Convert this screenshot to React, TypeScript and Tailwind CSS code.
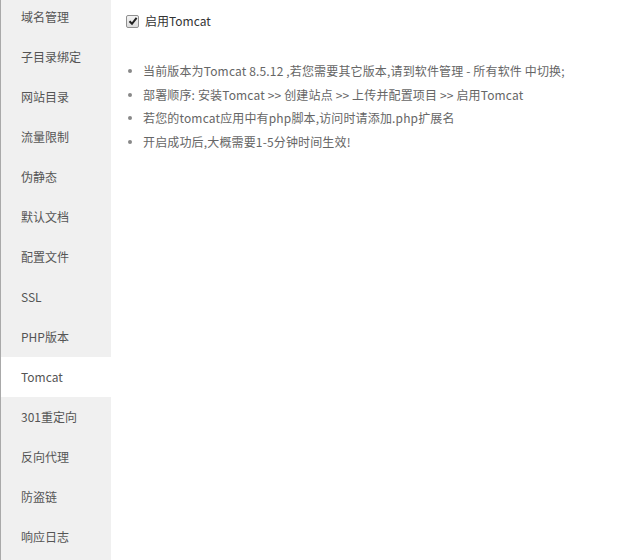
const menu = [
  "域名管理",
  "子目录绑定",
  "网站目录",
  "流量限制",
  "伪静态",
  "默认文档",
  "配置文件",
  "SSL",
  "PHP版本",
  "Tomcat",
  "301重定向",
  "反向代理",
  "防盗链",
  "响应日志",
];

const tips = [
  "当前版本为Tomcat 8.5.12 ,若您需要其它版本,请到软件管理 - 所有软件 中切换;",
  "部署顺序: 安装Tomcat >> 创建站点 >> 上传并配置项目 >> 启用Tomcat",
  "若您的tomcat应用中有php脚本,访问时请添加.php扩展名",
  "开启成功后,大概需要1-5分钟时间生效!",
];

export default function App() {
  return (
    <div
      className="flex h-[560px] w-[639px] overflow-hidden bg-white text-[12px]"
      style={{ fontFamily: '"Noto Sans CJK SC", "Noto Sans", sans-serif' }}
    >
      {/* Side menu */}
      <div className="w-[111px] shrink-0 border-l border-[#a9a9a9] bg-[#f0f0f0]">
        <ul className="-mt-[3px]">
          {menu.map((item) => (
            <li
              key={item}
              className={
                item === "Tomcat"
                  ? "flex h-[40px] items-center bg-white pl-[20px] text-[#555]"
                  : "flex h-[40px] items-center pl-[20px] text-[#555]"
              }
            >
              {item}
            </li>
          ))}
        </ul>
      </div>

      {/* Content */}
      <div className="flex-1 pl-[15px] pt-[12px]">
        <label className="flex items-center gap-[6px] text-[#333]">
          <span className="flex h-[13px] w-[13px] items-center justify-center rounded-[2px] border border-[#8f8f8f] bg-gradient-to-b from-[#f4f4f4] to-[#dcdcdc]">
            <svg width="10" height="10" viewBox="0 0 10 10">
              <path d="M1.5 5.2 L4 7.8 L8.6 1.8" fill="none" stroke="#222" strokeWidth="2" />
            </svg>
          </span>
          启用Tomcat
        </label>

        <ul className="mt-[29px] tracking-[0.15px] text-[#666]">
          {tips.map((t) => (
            <li key={t} className="flex h-[23.7px] items-center">
              <span className="mr-[11px] ml-[2px] h-[4px] w-[4px] rounded-full bg-[#888]" />
              {t}
            </li>
          ))}
        </ul>
      </div>
    </div>
  );
}
